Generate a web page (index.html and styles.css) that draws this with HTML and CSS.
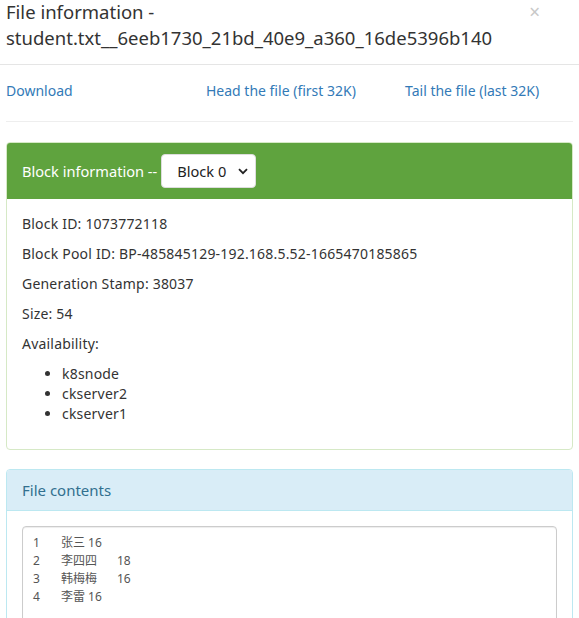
FILE: index.html
```html
<!DOCTYPE html>
<html>
<head>
<meta charset="utf-8">
<link rel="stylesheet" href="styles.css">
</head>
<body>
<div class="modal">
  <div class="modal-header">
    <h4 class="modal-title"><span class="t1">File information -</span><span class="t2">student.txt__6eeb1730_21bd_40e9_a360_16de5396b140</span></h4>
    <span class="close">&times;</span>
  </div>
  <div class="modal-body">
    <div class="links">
      <a href="#">Download</a>
      <a href="#">Head the file (first 32K)</a>
      <a href="#">Tail the file (last 32K)</a>
    </div>
    <hr class="sep">
    <div class="panel panel-success">
      <div class="panel-heading">
        <span class="panel-title">Block information --</span>
        <div class="select"><span>Block 0</span>
          <svg width="10" height="7" viewBox="0 0 10 7"><path d="M1 1.2 L5 5.2 L9 1.2" fill="none" stroke="#222" stroke-width="1.8"/></svg>
        </div>
      </div>
      <div class="panel-body">
        <p>Block ID: 1073772118</p>
        <p>Block Pool ID: BP-485845129-192.168.5.52-1665470185865</p>
        <p>Generation Stamp: 38037</p>
        <p>Size: 54</p>
        <p>Availability:</p>
        <ul>
          <li>k8snode</li>
          <li>ckserver2</li>
          <li>ckserver1</li>
        </ul>
      </div>
    </div>
    <div class="panel panel-info">
      <div class="panel-heading">
        <span class="panel-title">File contents</span>
      </div>
      <div class="panel-body">
        <textarea class="form-control" rows="8" readonly>1	张三 16
2	李四四	18
3	韩梅梅	16
4	李雷 16</textarea>
      </div>
    </div>
  </div>
</div>
</body>
</html>
```
FILE: styles.css
```css
html, body {
  margin: 0;
  padding: 0;
  background: #fff;
}
body {
  font-family: "Noto Sans", "Noto Sans CJK SC", sans-serif;
  font-size: 14px;
  line-height: 20px;
  letter-spacing: 0.2px;
  color: #333;
  overflow: hidden;
}
.modal {
  width: 579px;
}
.modal-header {
  display: flex;
  justify-content: space-between;
  align-items: flex-start;
  padding: 0 6px 12px 6px;
  border-bottom: 1px solid #e5e5e5;
}
.modal-title {
  margin: 0;
  font-size: 18.5px;
  font-weight: normal;
  letter-spacing: 0;
  color: #333;
}
.modal-title .t1 {
  display: block;
  line-height: 23px;
}
.modal-title .t2 {
  display: block;
  line-height: 29px;
}
.close {
  font-size: 19px;
  line-height: 22px;
  padding-top: 1px;
  color: #c8c8c8;
  margin-right: 33px;
  letter-spacing: 0;
}
.modal-body {
  padding: 16px 6px 0 6px;
}
.links {
  display: grid;
  grid-template-columns: 200px 199px 1fr;
  letter-spacing: 0;
}
.links a {
  color: #337ab7;
  text-decoration: none;
}
.sep {
  border: 0;
  border-top: 1px solid #eee;
  margin: 20px 0 20px 0;
}
.panel {
  border: 1px solid #d6e9c6;
  border-radius: 4px;
  margin-bottom: 20px;
  background: #fff;
}
.panel-heading {
  display: flex;
  align-items: center;
  padding: 10px 15px;
  border-top-left-radius: 3px;
  border-top-right-radius: 3px;
}
.panel-success {
  margin-bottom: 19px;
}
.panel-success .panel-heading {
  padding: 11px 15px 10px 15px;
  background: #5fa33e;
  color: #fff;
  border-bottom: 1px solid #5fa33e;
}
.panel-title {
  font-size: 14.6px;
  line-height: 20px;
  letter-spacing: 0;
}
.select {
  display: flex;
  align-items: center;
  justify-content: space-between;
  margin-left: 4px;
  width: 95px;
  height: 34px;
  box-sizing: border-box;
  padding: 0 7px 0 15px;
  background: #fff;
  border-radius: 4px;
  border: 1px solid #ddd;
  color: #222;
  font-size: 14.6px;
  letter-spacing: 0;
}
.panel-body {
  padding: 15px;
}
.panel-body p {
  margin: 0 0 10px 0;
}
.panel-body ul {
  margin: 0 0 10px 0;
  padding-left: 40px;
}
.panel-info {
  border-color: #bce8f1;
}
.panel-info .panel-heading {
  background: #d9edf7;
  color: #31708f;
  border-bottom: 1px solid #bce8f1;
}
.panel-info .panel-title {
  font-size: 15px;
}
.form-control {
  display: block;
  width: 100%;
  box-sizing: border-box;
  margin: 0;
  padding: 7px 10px 6px 10px;
  border: 1px solid #ccc;
  border-radius: 4px;
  font-family: "Noto Sans", "Noto Sans CJK SC", sans-serif;
  font-size: 12px;
  line-height: 18px;
  color: #555;
  tab-size: 28px;
  resize: none;
  box-shadow: inset 0 1px 1px rgba(0,0,0,.075);
}
```
